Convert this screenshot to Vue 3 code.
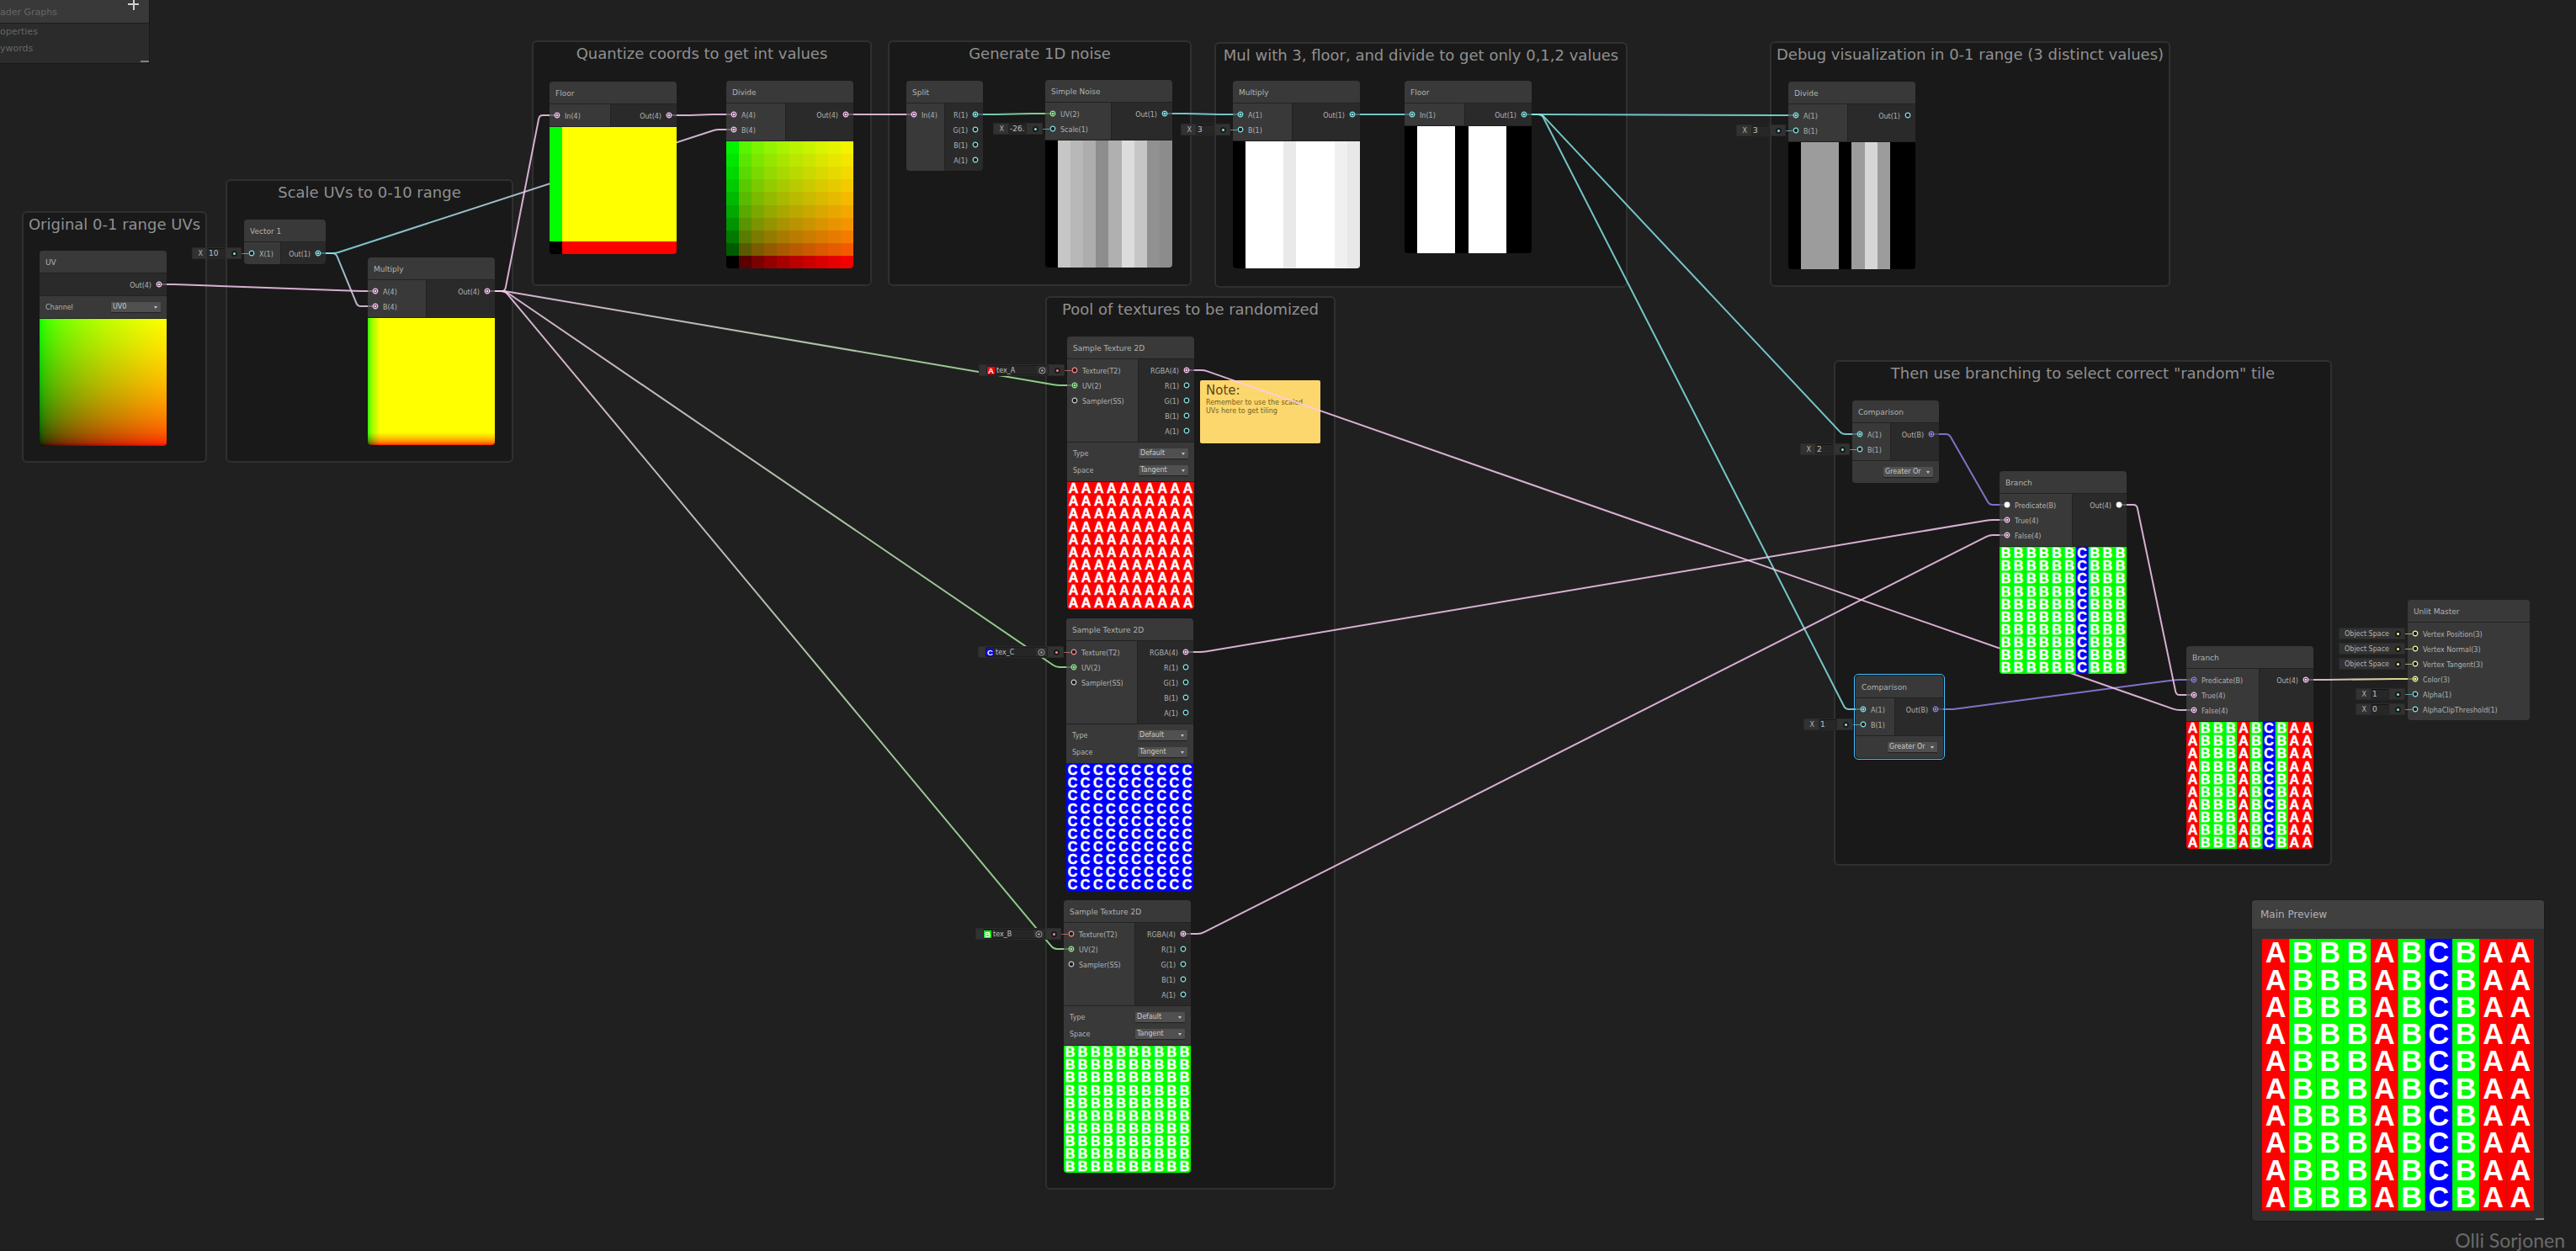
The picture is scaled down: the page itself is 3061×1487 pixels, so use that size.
<script setup>
const PINK = '#fbcbf4'
const CYAN = '#84e4e7'
const GREEN = '#9aef92'
const VIOLET = '#9481e6'
const YELLOW = '#f6ff9a'
const RED = '#ff8b8b'
const GREY = '#c9c9c9'

const groups = [
  { title: 'Original 0-1 range UVs', x: 26, y: 251, w: 220, h: 299 },
  { title: 'Scale UVs to 0-10 range', x: 268, y: 213, w: 342, h: 337 },
  { title: 'Quantize coords to get int values', x: 632, y: 48, w: 404, h: 292 },
  { title: 'Generate 1D noise', x: 1055, y: 48, w: 361, h: 292 },
  { title: 'Mul with 3, floor, and divide to get only 0,1,2 values', x: 1443, y: 50, w: 491, h: 292 },
  { title: 'Debug visualization in 0-1 range (3 distinct values)', x: 2103, y: 49, w: 476, h: 292 },
  { title: 'Pool of textures to be randomized', x: 1242, y: 352, w: 345, h: 1062 },
  { title: 'Then use branching to select correct "random" tile', x: 2179, y: 428, w: 592, h: 601 },
]

const p = (label, color, on = false, extra = {}) => ({ label, color, on, ...extra })

// Linear ramp encoded for display
const enc = (v) => Math.round(255 * Math.pow(v, 1 / 2.2))
const channel = (v, ch) => (ch === 'r' ? `rgb(${enc(v)},0,0)` : `rgb(0,${enc(v)},0)`)
const ramp = (ch, span) =>
  [0, 0.02, 0.05, 0.1, 0.2, 0.35, 0.5, 0.75, 1].map((v) => `${channel(v, ch)} ${v * span}%`).join(',')
const steps = (ch, fn) =>
  Array.from({ length: 10 }, (_, i) => `${channel(fn(i), ch)} ${i * 10}% ${i * 10 + 10}%`).join(',')
const mix = (make) => ({
  backgroundImage: `linear-gradient(to right,${make('r')}),linear-gradient(to top,${make('g')})`,
  backgroundBlendMode: 'screen',
})
const bars = (list) => ({
  backgroundImage: `linear-gradient(to right,${list.map((c, i) => `${c} ${i * 10}% ${i * 10 + 10}%`).join(',')})`,
})
const K = '#000'
const W = '#fff'
const M = '#9c9c9c'

const sample = (id, x, y, letter) => ({
  id, x, y, w: 151, split: 85, title: 'Sample Texture 2D',
  ins: [p('Texture(T2)', RED, false, { tex: letter }), p('UV(2)', GREEN, true), p('Sampler(SS)', GREY)],
  outs: [p('RGBA(4)', PINK, true), p('R(1)', CYAN), p('G(1)', CYAN), p('B(1)', CYAN), p('A(1)', CYAN)],
  settings: [{ label: 'Type', value: 'Default' }, { label: 'Space', value: 'Tangent' }],
  tiles: letter.repeat(10),
})

const nodes = [
  { id: 'uv', x: 47, y: 298, w: 151, split: 0, title: 'UV', ins: [], outs: [p('Out(4)', PINK, true)],
    settings: [{ label: 'Channel', value: 'UV0' }], fill: mix((c) => ramp(c, 100)) },
  { id: 'vec', x: 290, y: 261, w: 97, split: 44, title: 'Vector 1', ins: [p('X(1)', CYAN, false, { num: '10' })], outs: [p('Out(1)', CYAN, true)] },
  { id: 'mul', x: 437, y: 306, w: 151, split: 70, title: 'Multiply', ins: [p('A(4)', PINK, true), p('B(4)', PINK, true)],
    outs: [p('Out(4)', PINK, true)], fill: mix((c) => ramp(c, 10)) },
  { id: 'floor', x: 653, y: 97, w: 151, split: 73, title: 'Floor', ins: [p('In(4)', PINK, true)],
    outs: [p('Out(4)', PINK, true)], fill: mix((c) => steps(c, (i) => Math.min(i, 1))) },
  { id: 'div', x: 863, y: 96, w: 151, split: 71, title: 'Divide', ins: [p('A(4)', PINK, true), p('B(4)', PINK, true)],
    outs: [p('Out(4)', PINK, true)], fill: mix((c) => steps(c, (i) => i / 10)) },
  { id: 'split', x: 1077, y: 96, w: 91, split: 46, title: 'Split', ins: [p('In(4)', PINK, true)],
    outs: [p('R(1)', CYAN, true), p('G(1)', CYAN), p('B(1)', CYAN), p('A(1)', CYAN)] },
  { id: 'noise', x: 1242, y: 95, w: 151, split: 79, title: 'Simple Noise', ins: [p('UV(2)', GREEN, true), p('Scale(1)', CYAN, false, { num: '-26.' })],
    outs: [p('Out(1)', CYAN, true)],
    fill: bars([K, '#c6c6c6', '#b8b8b8', '#adadad', '#8d8d8d', '#b0b0b0', '#dcdcdc', '#c6c6c6', '#919191', '#8c8c8c']) },
  { id: 'mul3', x: 1465, y: 96, w: 151, split: 71, title: 'Multiply', ins: [p('A(1)', CYAN, true), p('B(1)', CYAN, false, { num: '3' })],
    outs: [p('Out(1)', CYAN, true)], fill: bars([K, W, W, W, '#e9e9e9', W, W, W, '#f0f0f0', '#e8e8e8']) },
  { id: 'floor3', x: 1669, y: 96, w: 151, split: 72, title: 'Floor', ins: [p('In(1)', CYAN, true)],
    outs: [p('Out(1)', CYAN, true)], fill: bars([K, W, W, W, K, W, W, W, K, K]) },
  { id: 'debug', x: 2125, y: 97, w: 151, split: 71, title: 'Divide', ins: [p('A(1)', CYAN, true), p('B(1)', CYAN, false, { num: '3' })],
    outs: [p('Out(1)', CYAN)], fill: bars([K, M, M, M, K, M, '#d6d6d6', M, K, K]) },
  sample('texA', 1268, 400, 'A'),
  sample('texC', 1267, 735, 'C'),
  sample('texB', 1264, 1070, 'B'),
  { id: 'cmp2', x: 2201, y: 476, w: 103, split: 46, title: 'Comparison', ins: [p('A(1)', CYAN, true), p('B(1)', CYAN, false, { num: '2' })],
    outs: [p('Out(B)', VIOLET, true)], settings: [{ label: '', value: 'Greater Or' }] },
  { id: 'cmp1', x: 2205, y: 803, w: 104, split: 47, title: 'Comparison', selected: true,
    ins: [p('A(1)', CYAN, true), p('B(1)', CYAN, false, { num: '1' })],
    outs: [p('Out(B)', VIOLET, true)], settings: [{ label: '', value: 'Greater Or' }] },
  { id: 'br1', x: 2376, y: 560, w: 151, split: 87, title: 'Branch',
    ins: [p('Predicate(B)', VIOLET, true, { hot: true }), p('True(4)', PINK, true), p('False(4)', PINK, true)],
    outs: [p('Out(4)', PINK, true, { hot: true })], tiles: 'BBBBBBCBBB' },
  { id: 'br2', x: 2598, y: 768, w: 151, split: 87, title: 'Branch',
    ins: [p('Predicate(B)', VIOLET, true), p('True(4)', PINK, true), p('False(4)', PINK, true)],
    outs: [p('Out(4)', PINK, true)], tiles: 'ABBBABCBAA' },
  { id: 'master', x: 2861, y: 713, w: 145, split: 145, title: 'Unlit Master',
    ins: [
      p('Vertex Position(3)', YELLOW, false, { space: 'Object Space' }),
      p('Vertex Normal(3)', YELLOW, false, { space: 'Object Space' }),
      p('Vertex Tangent(3)', YELLOW, false, { space: 'Object Space' }),
      p('Color(3)', YELLOW, true),
      p('Alpha(1)', CYAN, false, { num: '1' }),
      p('AlphaClipThreshold(1)', CYAN, false, { num: '0' }),
    ],
    outs: [] },
]

const tileColor = { A: '#ff0000', B: '#00ff00', C: '#0000ff' }
const byId = Object.fromEntries(nodes.map((n) => [n.id, n]))

const links = [
  ['uv', 0, 'mul', 0], ['vec', 0, 'mul', 1], ['vec', 0, 'div', 1], ['mul', 0, 'floor', 0],
  ['mul', 0, 'texA', 1], ['mul', 0, 'texC', 1], ['mul', 0, 'texB', 1],
  ['floor', 0, 'div', 0], ['div', 0, 'split', 0], ['split', 0, 'noise', 0], ['noise', 0, 'mul3', 0],
  ['mul3', 0, 'floor3', 0], ['floor3', 0, 'debug', 0], ['floor3', 0, 'cmp2', 0], ['floor3', 0, 'cmp1', 0],
  ['cmp2', 0, 'br1', 0], ['cmp1', 0, 'br2', 0], ['texC', 0, 'br1', 1], ['texB', 0, 'br1', 2],
  ['br1', 0, 'br2', 1], ['texA', 0, 'br2', 2], ['br2', 0, 'master', 3],
]

const LEAD = 21
const edges = links.map(([from, o, to, i]) => {
  const a = byId[from]
  const b = byId[to]
  const x1 = a.x + a.w - 9
  const y1 = a.y + 40 + o * 18
  const x2 = b.x + 9
  const y2 = b.y + 40 + i * 18
  const ax = x1 + LEAD
  const bx = x2 - LEAD
  const len = Math.hypot(bx - ax, y2 - y1)
  const r = 4
  const ux = ((bx - ax) / len) * r
  const uy = ((y2 - y1) / len) * r
  return {
    x1, y1, x2, y2,
    c1: a.outs[o].color,
    c2: b.ins[i].color,
    d: `M${x1} ${y1}H${ax - r}Q${ax} ${y1} ${ax + ux} ${y1 + uy}L${bx - ux} ${y2 - uy}Q${bx} ${y2} ${bx + r} ${y2}H${x2}`,
  }
})

const box = (o) => ({ left: o.x + 'px', top: o.y + 'px', width: o.w + 'px', height: o.h ? o.h + 'px' : null })
</script>

<template>
  <main class="graph">
    <section v-for="g in groups" :key="g.title" class="group" :style="box(g)">
      <h2>{{ g.title }}</h2>
    </section>

    <aside class="note">
      <h3>Note:</h3>
      <p>Remember to use the scaled UVs here to get tiling</p>
    </aside>

    <svg class="edges" aria-hidden="true">
      <defs>
        <linearGradient v-for="(e, i) in edges" :id="'edge' + i" :key="i" gradientUnits="userSpaceOnUse"
          :x1="e.x1" :y1="e.y1" :x2="e.x2" :y2="e.y2">
          <stop offset="0" :stop-color="e.c1" />
          <stop offset="1" :stop-color="e.c2" />
        </linearGradient>
        <clipPath id="tile-corners">
          <path d="M0 0H320V312Q320 320 312 320H8Q0 320 0 312Z" />
        </clipPath>
      </defs>
      <path v-for="(e, i) in edges" :key="i" :d="e.d" :stroke="`url(#edge${i})`" />
    </svg>

    <article v-for="n in nodes" :key="n.id" class="node" :class="{ selected: n.selected }" :style="box(n)">
      <header>{{ n.title }}</header>
      <div class="ports">
        <div v-if="n.ins.length" class="ins" :class="{ whole: !n.outs.length }" :style="{ width: n.split + 'px' }">
          <div v-for="q in n.ins" :key="q.label" class="port" :style="{ color: q.color }">
            <i v-if="q.on" class="stub"></i>
            <template v-else-if="q.num || q.tex || q.space">
              <i class="wire"></i>
              <div class="slot">
                <label v-if="q.num" class="num">X<input type="text" :value="q.num" /></label>
                <div v-else-if="q.tex" class="object">
                  <svg class="thumb" viewBox="0 0 32 32">
                    <rect width="32" height="32" :fill="tileColor[q.tex]" />
                    <text x="16" y="28">{{ q.tex }}</text>
                  </svg>
                  <span>tex_{{ q.tex }}</span>
                  <button type="button" aria-label="Select texture">
                    <svg viewBox="0 0 10 10"><circle cx="5" cy="5" r="4" /><circle class="core" cx="5" cy="5" r="1.4" /></svg>
                  </button>
                </div>
                <span v-else class="space">{{ q.space }}</span>
                <i class="plug"></i>
              </div>
            </template>
            <svg class="dot" viewBox="0 0 8 8">
              <circle v-if="q.hot" class="hot" cx="4" cy="4" r="3.4" />
              <template v-else>
                <circle class="ring" cx="4" cy="4" r="2.8" />
                <circle v-if="q.on" class="core" cx="4" cy="4" r="1.6" />
              </template>
            </svg>
            <span>{{ q.label }}</span>
          </div>
        </div>
        <div v-if="n.outs.length" class="outs">
          <div v-for="q in n.outs" :key="q.label" class="port" :style="{ color: q.color }">
            <span>{{ q.label }}</span>
            <svg class="dot" viewBox="0 0 8 8">
              <circle v-if="q.hot" class="hot" cx="4" cy="4" r="3.4" />
              <template v-else>
                <circle class="ring" cx="4" cy="4" r="2.8" />
                <circle v-if="q.on" class="core" cx="4" cy="4" r="1.6" />
              </template>
            </svg>
            <i v-if="q.on" class="stub"></i>
          </div>
        </div>
      </div>
      <div v-if="n.settings" class="settings">
        <label v-for="s in n.settings" :key="s.value">
          <span>{{ s.label }}</span>
          <span class="select">
            <select :aria-label="s.label || n.title"><option>{{ s.value }}</option></select>
          </span>
        </label>
      </div>
      <div v-if="n.fill" class="preview" :style="n.fill"></div>
      <svg v-if="n.tiles" class="preview tiles small" viewBox="0 0 320 320">
        <g clip-path="url(#tile-corners)">
          <rect v-for="(t, c) in n.tiles" :key="c" :x="c * 32" y="0" width="33" height="320" :fill="tileColor[t]" />
        </g>
        <template v-for="(t, c) in n.tiles" :key="c">
          <text v-for="r in 10" :key="r" :x="c * 32 + 16" :y="r * 32 - 4">{{ t }}</text>
        </template>
      </svg>
    </article>

    <section class="blackboard">
      <header><span>ader Graphs</span><button type="button" aria-label="Add property"></button></header>
      <ul>
        <li>operties</li>
        <li>ywords</li>
      </ul>
      <i class="grip"></i>
    </section>

    <section class="main-preview">
      <header>Main Preview</header>
      <svg class="tiles" viewBox="0 0 320 320">
        <rect v-for="(t, c) in 'ABBBABCBAA'" :key="c" :x="c * 32" y="0" width="32" height="320" :fill="tileColor[t]" />
        <template v-for="(t, c) in 'ABBBABCBAA'" :key="c">
          <text v-for="r in 10" :key="r" :x="c * 32 + 16" :y="r * 32 - 4">{{ t }}</text>
        </template>
      </svg>
      <i class="grip"></i>
    </section>

    <footer>Olli Sorjonen</footer>
  </main>
</template>

<style>
body {
  margin: 0;
  background: #202020;
}
</style>

<style scoped>
* {
  box-sizing: border-box;
}
.graph {
  position: relative;
  min-height: 100vh;
  overflow: hidden;
  background: #202020;
  color: #b2b2b2;
  font-family: "DejaVu Sans", Verdana, sans-serif;
  font-size: 8px;
}
.group {
  position: absolute;
  border: 2px solid #303030;
  border-radius: 6px;
  background: #191919;
}
.group h2 {
  margin: 0;
  font-size: 18px;
  font-weight: 400;
  line-height: 28px;
  text-align: center;
  white-space: nowrap;
  color: #909090;
}
.note {
  position: absolute;
  left: 1426px;
  top: 452px;
  width: 143px;
  height: 75px;
  padding: 3px 7px;
  border-radius: 2px;
  background: #fcd76e;
  color: #5c4a12;
}
.note h3 {
  margin: 0;
  font-size: 15px;
  font-weight: 400;
  line-height: 19px;
}
.note p {
  margin: 0;
  font-size: 8px;
  line-height: 10px;
  color: #75601f;
}
.edges {
  position: absolute;
  inset: 0;
  width: 100%;
  height: 100%;
}
.edges > path {
  fill: none;
  stroke-width: 2;
  opacity: 0.84;
}
.node {
  position: absolute;
  border-radius: 4px;
}
.node.selected::after {
  content: "";
  position: absolute;
  inset: -2px;
  border: 1px solid #44c0ff;
  border-radius: 5px;
  pointer-events: none;
}
.node header {
  height: 27px;
  padding-left: 7px;
  border-bottom: 1px solid #222;
  border-radius: 4px 4px 0 0;
  background: #393939;
  font-size: 9px;
  line-height: 28px;
}
.ports {
  display: flex;
  border-radius: 0 0 4px 4px;
}
.ins,
.outs {
  padding: 4px 0;
  border-bottom: 1px solid #222;
}
.ins {
  border-right: 1px solid #222;
  background: #393939;
}
.outs {
  flex: 1;
  background: #2a2a2a;
}
.ports:last-child .ins,
.ports:last-child .outs {
  border-bottom: 0;
}
.ports:last-child .ins {
  border-radius: 0 0 0 4px;
}
.ports:last-child .outs {
  border-radius: 0 0 4px 0;
}
.ports:last-child .whole {
  border-right: 0;
  border-radius: 0 0 4px 4px;
}
.port {
  position: relative;
  display: flex;
  align-items: center;
  gap: 5px;
  height: 18px;
  padding: 0 5px;
  white-space: nowrap;
}
.outs .port {
  justify-content: flex-end;
}
.port > span {
  padding-top: 3px;
  color: #b2b2b2;
  line-height: 15px;
}
.dot {
  position: relative;
  flex: none;
  width: 8px;
  height: 8px;
}
.ring {
  fill: #1b1b1b;
  stroke: currentColor;
  stroke-width: 1.2;
}
.core {
  fill: currentColor;
}
.hot {
  fill: #fff;
}
.stub,
.wire {
  position: absolute;
  top: 8px;
  height: 2px;
  width: 6px;
  background: currentColor;
  opacity: 0.3;
}
.ins .stub {
  left: 0;
}
.outs .stub {
  right: 0;
}
.ins .wire {
  left: -9px;
  width: 14px;
  height: 1px;
  top: 9px;
  opacity: 0.6;
}
.slot {
  position: absolute;
  right: calc(100% + 3px);
  top: 2px;
  display: flex;
  align-items: center;
  height: 14px;
  border: 1px solid #2a2a2a;
  background: #323232;
  color: inherit;
}
.plug {
  width: 7px;
  height: 7px;
  margin: 0 4px 0 7px;
  border: 2px solid #1a1a1a;
  border-radius: 50%;
  background: currentColor;
}
.num {
  display: flex;
  align-items: center;
  gap: 5px;
  padding-left: 7px;
  color: #b2b2b2;
}
.num input {
  width: 22px;
  height: 12px;
  padding: 0 0 0 1px;
  border: 1px solid #222;
  border-top-color: #151515;
  border-radius: 2px;
  background: #272727;
  color: #c0c0c0;
  font: 9px/10px "DejaVu Sans", Verdana, sans-serif;
}
.object {
  display: flex;
  align-items: center;
  width: 74px;
  height: 12px;
  margin-left: 8px;
  border: 1px solid #1c1c1c;
  border-radius: 2px;
  background: #262626;
  color: #c0c0c0;
}
.thumb {
  width: 9px;
  height: 9px;
  margin-right: 2px;
  overflow: visible;
}
.thumb text,
.tiles text {
  fill: #fff;
  font: bold 34px "Liberation Sans", Arial, sans-serif;
  text-anchor: middle;
}
.small text {
  stroke: #fff;
  stroke-width: 1;
}
.object button {
  display: grid;
  place-items: center;
  width: 13px;
  height: 10px;
  margin-left: auto;
  padding: 0;
  border: 0;
  background: #2f2f2f;
  color: #a8a8a8;
}
.object button svg {
  width: 9px;
  height: 9px;
  fill: none;
  stroke: currentColor;
}
.object button .core {
  fill: currentColor;
  stroke: none;
}
.space {
  padding-left: 6px;
  color: #b2b2b2;
}
.settings {
  padding: 3px 7px;
  background: #393939;
  border-bottom: 1px solid #222;
}
.settings:last-child {
  border-bottom: 0;
  border-radius: 0 0 4px 4px;
}
.settings label {
  display: flex;
  align-items: center;
  justify-content: space-between;
  height: 20px;
}
.select {
  position: relative;
  display: flex;
}
.select::after {
  content: "";
  position: absolute;
  right: 4px;
  top: 5px;
  border: 2px solid transparent;
  border-top: 3px solid #c4c4c4;
  border-bottom: 0;
  pointer-events: none;
}
select {
  appearance: none;
  width: 59px;
  height: 12px;
  padding: 0 2px;
  border: 0;
  border-radius: 1px;
  background: #505050;
  box-shadow: 0 1px 1px #222;
  color: #cacaca;
  font: 8px/12px "DejaVu Sans", Verdana, sans-serif;
}
.preview {
  display: block;
  width: 100%;
  aspect-ratio: 1;
  border-radius: 0 0 4px 4px;
}
.tiles {
  overflow: visible;
}
.blackboard {
  position: absolute;
  left: 0;
  top: 0;
  width: 178px;
  border-right: 1px solid #181818;
  border-bottom: 1px solid #181818;
  border-radius: 0 0 3px 0;
  background: #2b2b2b;
  color: #666;
  font-size: 11px;
}
.blackboard header {
  display: flex;
  justify-content: space-between;
  height: 28px;
  border-bottom: 1px solid #1c1c1c;
  background: #393939;
  line-height: 30px;
}
.blackboard button {
  width: 13px;
  height: 12px;
  margin-right: 12px;
  padding: 0;
  border: 0;
  background:
    linear-gradient(#d0d0d0, #d0d0d0) center 4px / 13px 2px no-repeat,
    linear-gradient(#d0d0d0, #d0d0d0) center top / 2px 12px no-repeat;
}
.blackboard ul {
  margin: 0;
  padding: 0 0 7px;
  list-style: none;
  line-height: 20px;
}
.grip {
  position: absolute;
  right: 0;
  bottom: 1px;
  width: 10px;
  height: 2px;
  background: #808080;
}
.main-preview {
  position: absolute;
  right: 38px;
  bottom: 36px;
  width: 347px;
  padding-bottom: 12px;
  border-radius: 4px;
  background: #303030;
  box-shadow: 0 0 0 1px #1a1a1a;
}
.main-preview header {
  height: 34px;
  padding-left: 10px;
  border-radius: 4px 4px 0 0;
  background: #404040;
  font-size: 12px;
  line-height: 34px;
}
.main-preview .tiles {
  display: block;
  margin: 12px 12px 0;
}
footer {
  position: absolute;
  right: 13px;
  bottom: 0;
  color: #6a6a6a;
  font: 23px/25px Lato, "Open Sans", sans-serif;
}
</style>
